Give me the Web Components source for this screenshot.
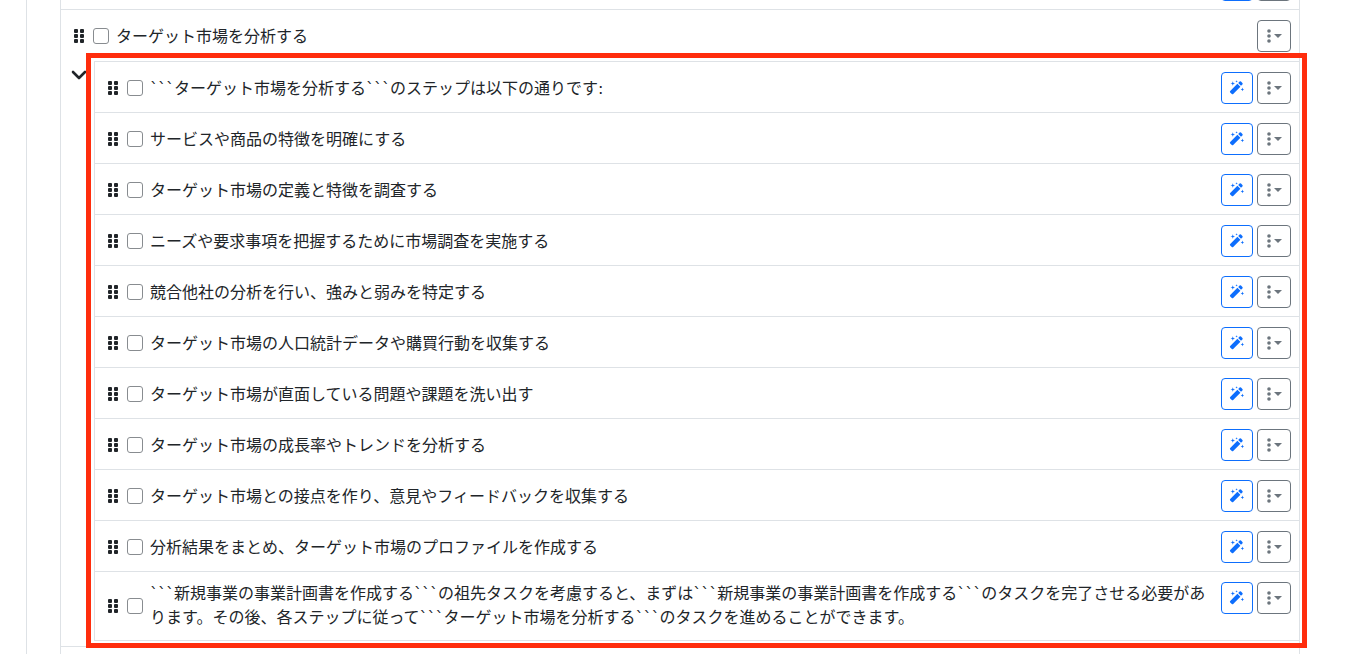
<!DOCTYPE html>
<html lang="ja">
<head>
<meta charset="utf-8">
<title>タスク</title>
<style>
    html, body { margin: 0; height: 100%; overflow: hidden; background: #fff; }
    body {
        position: relative;
        color: #212529;
        /* DejaVu solo para las comillas invertidas, que son anchas en la referencia */
        font-family: "DejaVu Sans", "Noto Sans CJK JP", sans-serif;
        font-size: 16px;
        line-height: 24px;
    }
</style>
</head>
<body>
<task-page>
    <row-actions slot="previous" wand></row-actions>
    <task-row slot="parent" no-wand>ターゲット市場を分析する</task-row>
    <task-row>```ターゲット市場を分析する```のステップは以下の通りです:</task-row>
    <task-row>サービスや商品の特徴を明確にする</task-row>
    <task-row>ターゲット市場の定義と特徴を調査する</task-row>
    <task-row>ニーズや要求事項を把握するために市場調査を実施する</task-row>
    <task-row>競合他社の分析を行い、強みと弱みを特定する</task-row>
    <task-row>ターゲット市場の人口統計データや購買行動を収集する</task-row>
    <task-row>ターゲット市場が直面している問題や課題を洗い出す</task-row>
    <task-row>ターゲット市場の成長率やトレンドを分析する</task-row>
    <task-row>ターゲット市場との接点を作り、意見やフィードバックを収集する</task-row>
    <task-row>分析結果をまとめ、ターゲット市場のプロファイルを作成する</task-row>
    <task-row>```新規事業の事業計画書を作成する```の祖先タスクを考慮すると、まずは```新規事業の事業計画書を作成する```のタスクを完了させる必要があります。その後、各ステップに従って```ターゲット市場を分析する```のタスクを進めることができます。</task-row>
</task-page>
<script>
// botones de la derecha: varita (opcional) y menu
class RowActions extends HTMLElement {
    constructor() {
        super();
        this.attachShadow({ mode: 'open' });
    }

    connectedCallback() {
        const wand = this.hasAttribute('wand') ? `
            <button class="wand" aria-label="AI">
                <svg width="16" height="16" viewBox="0 0 16 16" fill="#0d6efd">
                    <path d="M10.6 1.6a1 1 0 0 1 1.4 0l1.4 1.4a1 1 0 0 1 0 1.4L12 5.8 9.2 3zM8.4 3.8 11.4 6.8 4.2 14a1 1 0 0 1-1.4 0l-1.6-1.6a1 1 0 0 1 0-1.4z"/>
                    <path d="M3.8 1.2l.6 1.7 1.7.6-1.7.6-.6 1.7-.6-1.7-1.7-.6 1.7-.6zM13.4 7.6l.5 1.3 1.3.5-1.3.5-.5 1.3-.5-1.3-1.3-.5 1.3-.5zM7.6 .2l.3.9.9.3-.9.3-.3.9-.3-.9-.9-.3.9-.3z"/>
                </svg>
            </button>` : '';

        this.shadowRoot.innerHTML = `
        <style>
            :host { display: flex; gap: 4px; flex: none; }
            button {
                box-sizing: border-box;
                height: 32px;
                padding: 0;
                background: #fff;
                border: 1px solid #6c757d;
                border-radius: 4px;
                display: flex;
                align-items: center;
                justify-content: center;
            }
            .wand { width: 32px; border-color: #0d6efd; }
            .menu { width: 34px; gap: 3px; }
            .caret {
                width: 0;
                height: 0;
                border-top: 4.2px solid #6c757d;
                border-left: 4.2px solid transparent;
                border-right: 4.2px solid transparent;
            }
        </style>
        ${wand}
        <button class="menu" aria-label="menu">
            <svg width="4" height="14" viewBox="0 0 4 14" fill="#6c757d">
                <circle cx="2" cy="2" r="1.8"/><circle cx="2" cy="7" r="1.8"/><circle cx="2" cy="12" r="1.8"/>
            </svg>
            <span class="caret"></span>
        </button>
        `;
    }
}

class TaskRow extends HTMLElement {
    constructor() {
        super();
        this.attachShadow({ mode: 'open' });
    }

    connectedCallback() {
        const wand = this.hasAttribute('no-wand') ? '' : 'wand';

        this.shadowRoot.innerHTML = `
        <style>
            :host {
                display: flex;
                align-items: center;
                padding-left: 13px;
                color: #212529;
            }
            .grip { flex: none; display: block; margin: 2px 9px 0 0; }
            input {
                appearance: none;
                flex: none;
                box-sizing: border-box;
                width: 16px;
                height: 16px;
                margin: 2px 7px 0 0;
                background: #fff;
                border: 1px solid #888c90;
                border-radius: 3px;
            }
            .text { flex: 1; min-width: 0; margin-top: 4px; padding: 8px 14px 8px 0; }
            row-actions { align-self: flex-start; padding: 10px 8px 8px 0; }
            /* la ultima fila tiene dos lineas */
            :host(:last-child) .grip, :host(:last-child) input { margin-top: 0; }
            :host(:last-child) .text { margin-top: 2px; padding-bottom: 10px; }
        </style>
        <svg class="grip" width="10" height="14" viewBox="0 0 10 14" fill="#212529">
            <rect width="4" height="4" rx="1"/><rect x="6" width="4" height="4" rx="1"/>
            <rect y="5" width="4" height="4" rx="1"/><rect x="6" y="5" width="4" height="4" rx="1"/>
            <rect y="10" width="4" height="4" rx="1"/><rect x="6" y="10" width="4" height="4" rx="1"/>
        </svg>
        <input type="checkbox">
        <div class="text"><slot></slot></div>
        <row-actions ${wand}></row-actions>
        `;
    }
}

class TaskPage extends HTMLElement {
    constructor() {
        super();
        this.attachShadow({ mode: 'open' });
    }

    connectedCallback() {
        this.shadowRoot.innerHTML = `
        <style>
            :host {
                display: block;
                box-sizing: border-box;
                height: 654px;
                margin-left: 26px;
                padding-left: 33px;
                border-left: 1px solid #dee2e6;
            }
            .frame {
                box-sizing: border-box;
                width: 1240px;
                height: 100%;
                border-left: 1px solid #dee2e6;
                border-right: 1px solid #dee2e6;
            }
            .previous {
                box-sizing: border-box;
                height: 10px;
                overflow: hidden;
                display: flex;
                justify-content: flex-end;
                align-items: flex-end;
                padding: 0 8px 8px 0;
                border-bottom: 1px solid #dee2e6;
            }
            .parent { padding-bottom: 1px; }
            .children {
                display: flex;
                padding-bottom: 5px;
                border-bottom: 1px solid #dee2e6;
            }
            .gutter { flex: none; width: 33px; box-sizing: border-box; padding: 8px 0 0 10px; }
            .gutter svg { display: block; }
            .list {
                flex: 1;
                min-width: 0;
                border: 1px solid #dee2e6;
                border-right: 0;
            }
            .list ::slotted(task-row) { border-bottom: 1px solid #dee2e6; }
            .list ::slotted(task-row:last-child) { border-bottom: 0; }
            /* recuadro rojo encima de la lista */
            .highlight {
                position: absolute;
                left: 86px;
                top: 53px;
                width: 1221px;
                height: 595px;
                box-sizing: border-box;
                border: 5px solid #ff2d0d;
                pointer-events: none;
            }
        </style>
        <div class="frame">
            <div class="previous"><slot name="previous"></slot></div>
            <div class="parent"><slot name="parent"></slot></div>
            <div class="children">
                <div class="gutter">
                    <svg width="16" height="12" viewBox="0 0 16 12" fill="none" stroke="#212529" stroke-width="2.6" stroke-linecap="round" stroke-linejoin="round">
                        <path d="M2 3l6 6 6-6"/>
                    </svg>
                </div>
                <div class="list"><slot></slot></div>
            </div>
        </div>
        <div class="highlight"></div>
        `;
    }
}

customElements.define('row-actions', RowActions);
customElements.define('task-row', TaskRow);
customElements.define('task-page', TaskPage);
</script>
</body>
</html>
